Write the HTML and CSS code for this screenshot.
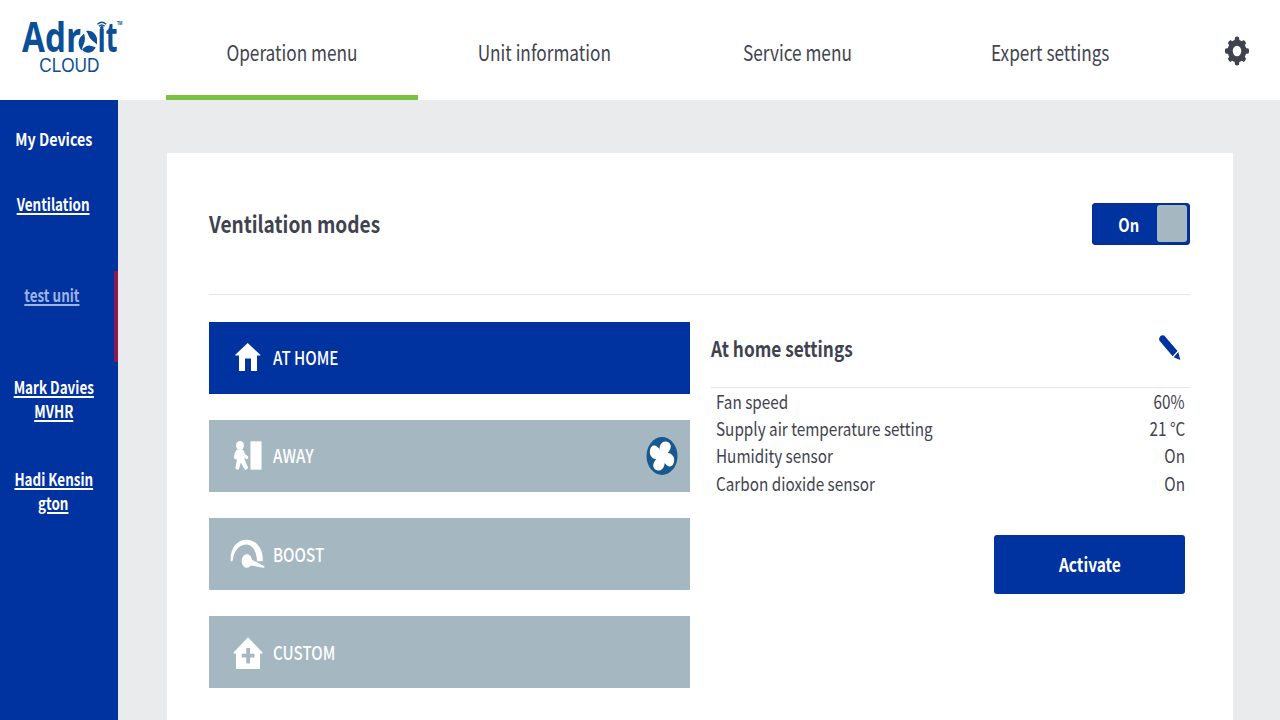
FILE: index.html
```html
<!DOCTYPE html>
<html lang="en">
<head>
<meta charset="utf-8">
<title>Adroit Cloud</title>
<link rel="stylesheet" href="styles.css">
</head>
<body>
<header class="topbar">
  <svg class="logo" width="165" height="100" viewBox="0 0 165 100" role="img" aria-label="Adroit Cloud">
    <g class="logo-ink">
      <text class="logo-name" x="22" y="52.3" textLength="59" lengthAdjust="spacingAndGlyphs">Adr</text>
      <text class="logo-name" x="97.5" y="52.3" textLength="20" lengthAdjust="spacingAndGlyphs">ıt</text>
      <text class="logo-tm" x="117" y="25" textLength="5.500" lengthAdjust="spacingAndGlyphs">TM</text>
      <text class="logo-sub" x="39.3" y="72.3" textLength="60" lengthAdjust="spacingAndGlyphs">CLOUD</text>
      <path d="M81.500 50.500C78 46 77.800 41 80.500 37L84 33.500C85 37 85.500 40 84 43.500Q82.500 47 81.500 50.500Z"/>
      <path d="M86 31C91 29.500 96 33 97 38.500L97 44.500C94 42 90.500 39.500 89 36.500Q88 33 86 31Z"/>
      <path d="M82 49.500Q86 45.500 89 45.500Q92.500 46 95.800 47.500Q92.500 52.800 88.500 52.700Q84.500 52.700 82 49.500Z"/>
      <circle cx="101.800" cy="27.800" r="1.800"/>
    </g>
    <path class="logo-wave" d="M99 26.300Q101.800 23.600 104.600 26.300M97.500 24.300Q101.800 20.200 106.100 24.300"/>
  </svg>
  <nav class="tabs">
    <a class="tab tab-active"><span class="squeeze">Operation menu</span></a>
    <a class="tab"><span class="squeeze">Unit information</span></a>
    <a class="tab"><span class="squeeze">Service menu</span></a>
    <a class="tab"><span class="squeeze">Expert settings</span></a>
  </nav>
  <svg class="gear" width="24" height="30" viewBox="-12 -15 24 30">
    <g transform="scale(1 1.200)">
      <g id="teeth">
        <path d="M-2-11.500Q0-12.600 2-11.500L2.500-8H-2.500ZM-2 11.500Q0 12.600 2 11.500L2.500 8H-2.500Z"/>
        <path d="M-11.500-2Q-12.600 0-11.500 2L-8 2.500V-2.500ZM11.500-2Q12.600 0 11.500 2L8 2.500V-2.500Z"/>
      </g>
      <use href="#teeth" transform="rotate(45) scale(.95)"/>
      <path fill-rule="evenodd" d="M0-9.300A9.300 9.300 0 1 1 0 9.300A9.300 9.300 0 1 1 0-9.300ZM0-4.300A4.300 4.300 0 1 0 0 4.300A4.300 4.300 0 1 0 0-4.300Z"/>
    </g>
  </svg>
</header>
<div class="body">
  <aside class="sidebar">
    <div class="side-title"><span class="squeeze">My Devices</span></div>
    <a class="side-item"><span class="squeeze">Ventilation</span></a>
    <a class="side-item side-active"><span class="squeeze">test unit</span></a>
    <a class="side-item"><span class="squeeze">Mark Davies</span><span class="squeeze">MVHR</span></a>
    <a class="side-item"><span class="squeeze">Hadi Kensin</span><span class="squeeze">gton</span></a>
  </aside>
  <main class="main">
    <section class="card">
      <div class="card-head">
        <h1 class="card-title"><span class="squeeze from-left">Ventilation modes</span></h1>
        <div class="toggle"><span class="toggle-label"><span class="squeeze">On</span></span><span class="toggle-knob"></span></div>
      </div>
      <div class="columns">
        <div class="modes">
          <div class="mode mode-active">
            <svg class="mode-icon" width="36" height="36" viewBox="0 0 36 36"><path d="M17.700 3L30.300 14.800V15.600H27V31H21V18.500H15V31H9V15.600H5.300V14.800Z"/></svg>
            <span class="squeeze from-left raised">AT HOME</span>
          </div>
          <div class="mode">
            <svg class="mode-icon" width="36" height="36" viewBox="0 0 36 36"><rect x="20.500" y="3.300" width="11" height="28.400"/><ellipse cx="10" cy="7.500" rx="3.900" ry="4.500"/><path d="M7 11.500L12.500 11.500Q14.500 13 15 16L18 18.500Q19 20.500 17 21.200L14 20L18 29.500Q17.500 32.200 14.800 31.500L10.700 24.500L9 31Q6.500 32.800 5.300 30L7 21.500Q4.200 22 4 19.500Q4.500 13.500 7 11.500Z"/></svg>
            <span class="squeeze from-left raised">AWAY</span>
            <svg class="fan" width="34" height="40" viewBox="-17 -20 34 40">
              <ellipse class="fan-disc" rx="15.500" ry="18.900"/>
              <g transform="scale(1 1.200) rotate(8)">
                <path id="blade" d="M-2-.500C-5-5-3.500-12.500 2.500-12.600C9-12.600 9.800-6 2-.500Z"/>
                <use href="#blade" transform="rotate(90)"/>
                <use href="#blade" transform="rotate(180)"/>
                <use href="#blade" transform="rotate(270)"/>
                <circle r="2"/>
              </g>
            </svg>
          </div>
          <div class="mode">
            <svg class="mode-icon" width="36" height="36" viewBox="0 0 36 36"><g transform="translate(0 1.700)"><path d="M.800 23.500C-.500 11 7 2 16.500 2C26 2 33.700 11 32.700 23.500H27C26.500 13 22.500 7 16.500 6.700C9 6.700 3.800 13 2.500 23.500Z"/><path d="M16.500 16.500C20 16.500 21.500 19 21.800 22L34.500 28.500Q34.500 30.300 33 30L21 27.700Q18.500 30.500 16 30C10 28.500 10.500 17 16.500 16.500Z"/></g></svg>
            <span class="squeeze from-left">BOOST</span>
          </div>
          <div class="mode">
            <svg class="mode-icon" width="36" height="36" viewBox="0 0 36 36"><path fill-rule="evenodd" d="M18 3.300L32.500 18.500V19.500H30V35H6V19.500H3.500V18.500ZM16.300 14V19.700H11.700V23.400H16.300V29.500H20V23.400H24.500V19.700H20V14Z"/></svg>
            <span class="squeeze from-left">CUSTOM</span>
          </div>
        </div>
        <div class="settings">
          <div class="settings-head">
            <h2 class="settings-title"><span class="squeeze from-left">At home settings</span></h2>
            <svg class="pencil" width="24" height="28" viewBox="0 0 24 28"><path d="M1.500 4.500Q3 1.300 6.200 2.600L19.500 18L14.700 23.300L1.500 7.800Q.700 6 1.500 4.500ZM20.300 19L22.300 27L15.700 24.200Z"/></svg>
          </div>
          <dl class="rows">
            <div class="row"><dt class="squeeze from-left">Fan speed</dt><dd class="squeeze from-right">60%</dd></div>
            <div class="row"><dt class="squeeze from-left">Supply air temperature setting</dt><dd class="squeeze from-right">21 °C</dd></div>
            <div class="row"><dt class="squeeze from-left">Humidity sensor</dt><dd class="squeeze from-right">On</dd></div>
            <div class="row"><dt class="squeeze from-left">Carbon dioxide sensor</dt><dd class="squeeze from-right">On</dd></div>
          </dl>
          <button class="activate"><span class="squeeze">Activate</span></button>
        </div>
      </div>
    </section>
  </main>
</div>
</body>
</html>
```
FILE: styles.css
```css
* { box-sizing: border-box; }
body {
  margin: 0;
  width: 1280px;
  height: 720px;
  overflow: hidden;
  display: flex;
  flex-direction: column;
  font-family: "Noto Sans CJK SC", "Noto Sans", sans-serif;
  color: #3f4350;
  background: #eaebed;
}
h1, h2, dl, dd { margin: 0; }

/* Condensed letterforms: nearly the same horizontal ratio everywhere */
.squeeze { display: inline-block; white-space: nowrap; transform: scaleX(.82); }
.from-left { transform-origin: left center; }
.from-right { transform-origin: right center; }

.topbar { height: 100px; flex: none; display: flex; background: #fff; }
.logo { flex: none; }
.logo-ink { fill: #0c4f96; }
.logo-name { font: 700 41px "Open Sans", sans-serif; }
.logo-sub { font: 400 20px "Liberation Sans", sans-serif; }
.logo-tm { font: 700 4.500px "Open Sans", sans-serif; }
.logo-wave { fill: none; stroke: #0c4f96; stroke-width: 1.300; }
.tabs { display: flex; width: 1011px; margin-left: .500px; }
.tab {
  flex: 1;
  display: flex;
  justify-content: center;
  padding-top: 37px;
  font-size: 21px;
  line-height: 31px;
  border-bottom: 5px solid transparent;
}
.tab-active { border-bottom-color: #79c143; }
.gear { margin: 36px 0 0 48.500px; fill: #3f4350; }

.body { flex: 1; min-height: 0; display: flex; }
.sidebar {
  width: 118px;
  flex: none;
  background: #0032a0;
  color: #fff;
  font-size: 17px;
  font-weight: 700;
  line-height: 24px;
}
.side-title { height: 79px; padding: 27px 11px 0 0; display: flex; justify-content: center; }
.side-title .squeeze { transform: scaleX(.84); }
.side-item {
  height: 91.500px;
  padding: 13px 7px 0 0;
  display: flex;
  flex-direction: column;
  align-items: center;
  border-right: 4px solid transparent;
}
.side-item .squeeze { transform: scaleX(.79); text-decoration: underline; text-underline-offset: 2px; text-decoration-thickness: 1.500px; }
.side-active { padding-right: 11px; padding-top: 12px; border-right-color: #8d1a4e; color: #9db4e0; }

.main { flex: 1; padding: 53px 47px 0 49px; }
.card { height: 567px; padding: 0 43px 0 42px; background: #fff; }
.card-head {
  height: 142px;
  display: flex;
  justify-content: space-between;
  align-items: center;
  border-bottom: 1px solid #e4e5e7;
}
.card-title { padding-bottom: 2px; font-size: 23px; line-height: 34px; }
.card-title .squeeze { transform: scaleX(.83); }
.toggle {
  width: 98px;
  height: 42px;
  padding: 2px;
  display: flex;
  border-radius: 3px;
  background: #0032a0;
  border: 1px solid #0a2a86;
}
.toggle-label { flex: 1; padding-left: 5px; text-align: center; color: #fff; font-size: 18px; font-weight: 700; line-height: 36px; }
.toggle-knob { width: 30px; margin: -1px 0 0; border-radius: 3px; background: #a5b8c2; }

.columns { display: grid; grid-template-columns: 481px 479px; column-gap: 21px; padding-top: 27px; }
.modes { display: grid; row-gap: 26px; }
.mode {
  height: 72px;
  padding-left: 21px;
  display: flex;
  align-items: center;
  background: #a5b8c2;
  color: #fff;
  font-size: 18.500px;
  font-weight: 500;
  line-height: 26px;
}
.mode-active { background: #0032a0; }
.mode-icon { flex: none; margin-right: 7px; fill: #fff; }
.raised { padding-bottom: 2px; }
.fan { margin: 0 11px 0 auto; fill: #fff; }
.fan-disc { fill: #17598f; }

.settings-head {
  height: 66px;
  padding: 11px 8px 0 0;
  display: flex;
  justify-content: space-between;
  border-bottom: 1px solid #e4e5e7;
}
.settings-title { font-size: 21px; line-height: 31px; }
.pencil { fill: #0032a0; }
.rows { padding: 0 5px 1px; font-size: 18.500px; line-height: 27.200px; }
.row { display: flex; justify-content: space-between; }
.row .squeeze { transform: scaleX(.826); }
.activate {
  display: block;
  width: 191px;
  height: 59px;
  margin: 37px 5px 0 auto;
  padding: 0;
  border: 0;
  border-radius: 3px;
  background: #0032a0;
  color: #fff;
  font: 700 18.500px "Noto Sans CJK SC", "Noto Sans", sans-serif;
}
.activate .squeeze { transform: scaleX(.84); }
```
